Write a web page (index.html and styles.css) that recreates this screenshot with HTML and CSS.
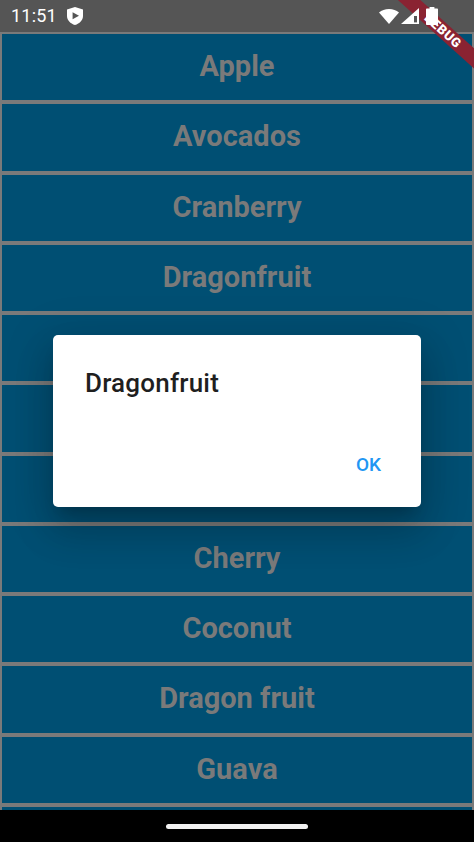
FILE: index.html
```html
<!DOCTYPE html>
<html lang="en">
<head>
    <meta charset="UTF-8">
    <meta name="viewport" content="width=device-width, initial-scale=1.0">
    <title>Fruits</title>
    <link rel="stylesheet" href="styles.css">
</head>
<body>
<div class="phone">
    <div class="debug-banner">DEBUG</div>

    <div class="status-bar">
        <span class="clock">11:51</span>
        <svg class="shield" viewBox="0 0 16 18">
            <path fill="#fff" fill-rule="evenodd" d="M8 0 L16 2.6 V9 C16 13.2 12.6 16.6 8 18 C3.4 16.6 0 13.2 0 9 V2.6 Z M5.6 5.2 V12.2 L12 8.7 Z"/>
        </svg>
        <div class="status-icons">
            <svg class="wifi" viewBox="0 0 20 15">
                <path fill="#fff" d="M10 15 L0 3.6 C2.6 1.3 6 0 10 0 C14 0 17.4 1.3 20 3.6 Z"/>
            </svg>
            <svg class="signal" viewBox="0 0 18 16">
                <path fill="#fff" d="M18 0 V16 H0 Z"/>
                <path fill="#555" d="M13 8 H16 V14.4 H13 Z"/>
            </svg>
            <svg class="battery" viewBox="0 0 12 18">
                <path fill="#fff" d="M3.6 0 H8.4 V1.6 H11 C11.6 1.6 12 2 12 2.6 V17 C12 17.6 11.6 18 11 18 H1 C0.4 18 0 17.6 0 17 V2.6 C0 2 0.4 1.6 1 1.6 H3.6 Z"/>
            </svg>
        </div>
    </div>

    <div class="fruit-list">
        <div class="fruit-tile">Apple</div>
        <div class="fruit-tile">Avocados</div>
        <div class="fruit-tile">Cranberry</div>
        <div class="fruit-tile">Dragonfruit</div>
        <div class="fruit-tile">Banana</div>
        <div class="fruit-tile">Blackberry</div>
        <div class="fruit-tile">Blueberry</div>
        <div class="fruit-tile">Cherry</div>
        <div class="fruit-tile">Coconut</div>
        <div class="fruit-tile">Dragon fruit</div>
        <div class="fruit-tile">Guava</div>
        <div class="fruit-tile"></div>
    </div>

    <div class="nav-bar">
        <div class="home-pill"></div>
    </div>

    <div class="dialog">
        <div class="dialog-title">Dragonfruit</div>
        <div class="dialog-actions">
            <span class="dialog-ok">OK</span>
        </div>
    </div>
</div>
</body>
</html>
```

FILE: styles.css
```css
html, body {
    margin: 0;
    height: 100%;
    background: #000;
}
.phone {
    position: relative;
    width: 474px;
    height: 842px;
    overflow: hidden;
    display: flex;
    flex-direction: column;
    font-family: Roboto, "Liberation Sans", sans-serif;
}
.status-bar {
    position: relative;
    z-index: 2;
    height: 32px;
    flex-shrink: 0;
    display: flex;
    align-items: center;
    padding: 0 36px 0 11px;
    color: #fff;
}
.phone::before {
    content: "";
    position: absolute;
    top: 0;
    left: 0;
    right: 0;
    height: 32px;
    background: #555;
}
.clock {
    font-size: 18px;
    letter-spacing: 0.2px;
    margin-bottom: 1px;
}
.shield {
    width: 16px;
    height: 18px;
    margin-left: 10px;
    margin-bottom: 1px;
}
.status-icons {
    margin-left: auto;
    display: flex;
    align-items: center;
}
.wifi {
    width: 20px;
    height: 15px;
}
.signal {
    width: 18px;
    height: 16px;
    margin-left: 2px;
}
.battery {
    width: 12px;
    height: 18px;
    margin-left: 7px;
    margin-bottom: 1px;
}
.debug-banner {
    position: absolute;
    z-index: 1;
    top: 23px;
    left: 373px;
    width: 140px;
    height: 15px;
    line-height: 15px;
    text-align: center;
    transform: rotate(42deg);
    background: #8a2332;
    color: #fff;
    font-size: 13px;
    font-weight: 900;
    letter-spacing: 0.6px;
}
.fruit-list {
    flex: 1;
    overflow: hidden;
    background: #7a7a7a;
}
.fruit-tile {
    height: 66.25px;
    margin: 0 2px;
    border-top: 2px solid #7a7a7a;
    border-bottom: 2px solid #7a7a7a;
    background: #004f73;
    color: #7a7a7a;
    font-size: 29px;
    font-weight: 700;
    line-height: 65px;
    text-align: center;
}
.nav-bar {
    height: 32px;
    flex-shrink: 0;
    background: #000;
    display: flex;
    justify-content: center;
    align-items: center;
}
.home-pill {
    width: 142px;
    height: 5px;
    border-radius: 3px;
    background: #f2f2f2;
}
.dialog {
    position: absolute;
    top: 335px;
    left: 53px;
    width: 368px;
    height: 172px;
    box-sizing: border-box;
    padding: 32px 32px 0;
    background: #fff;
    border-radius: 5px;
    box-shadow: 0 24px 38px 3px rgba(0,0,0,0.14), 0 9px 46px 8px rgba(0,0,0,0.12), 0 11px 15px -7px rgba(0,0,0,0.2);
}
.dialog-title {
    font-size: 26px;
    font-weight: 500;
    letter-spacing: 0.2px;
    line-height: 32px;
    color: #1f1f1f;
}
.dialog-actions {
    display: flex;
    justify-content: flex-end;
    margin-top: 50px;
    margin-right: 8px;
}
.dialog-ok {
    font-size: 19px;
    font-weight: 500;
    line-height: 32px;
    color: #2196f3;
}
```
